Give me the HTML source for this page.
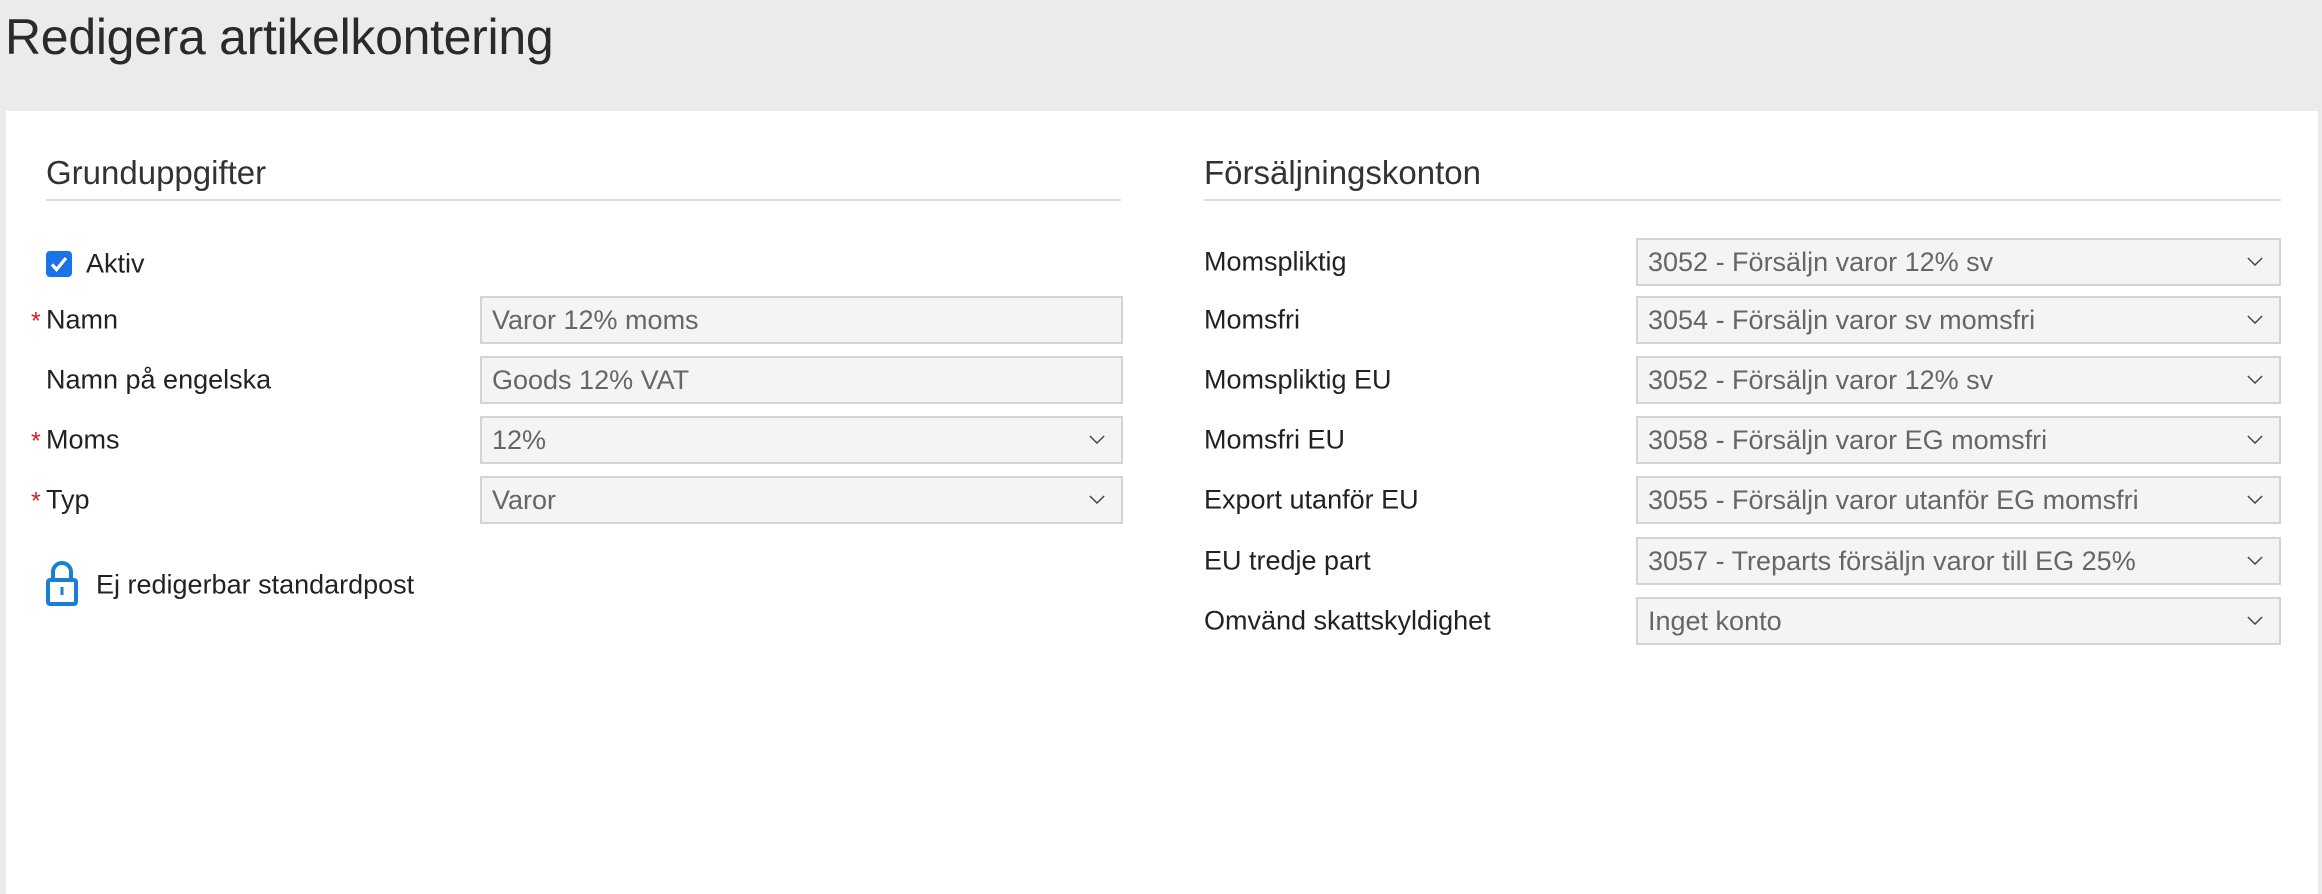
<!DOCTYPE html>
<html><head><meta charset="utf-8"><style>
body{margin:0;width:2322px;height:894px;background:#ebebeb;font-family:"Liberation Sans",sans-serif;color:#222;position:relative;overflow:hidden}
.title{position:absolute;left:5px;top:8px;font-size:50px;color:#2a2a2a;letter-spacing:-0.3px}
.panel{position:absolute;left:6px;top:111px;width:2312px;height:783px;background:#fff}
.h{position:absolute;font-size:33px;color:#333}
.line{position:absolute;height:2px;background:#ddd}
.lab{position:absolute;font-size:27px;color:#222;transform:translateY(-50%)}
.star{position:absolute;font-size:25px;color:#c22;transform:translateY(-50%)}
.inp{position:absolute;height:44px;background:#f4f4f4;border:2px solid #d4d4d4;box-sizing:content-box;font-size:27px;color:#666;line-height:44px;padding-left:10px}
.chev{position:absolute;right:16px;top:17px;width:16px;height:9px}
</style></head><body>
<div class="title">Redigera artikelkontering</div>
<div class="panel"></div>
<div class="h" style="left:46px;top:154px">Grunduppgifter</div>
<div class="line" style="left:46px;top:199px;width:1075px"></div>
<div class="h" style="left:1204px;top:154px">Försäljningskonton</div>
<div class="line" style="left:1204px;top:199px;width:1077px"></div>

<div style="position:absolute;left:46px;top:251px;width:26px;height:26px;background:#1a73e8;border-radius:4px"><svg width="26" height="26" viewBox="0 0 26 26"><path d="M6 13.5l4.5 5L20 7" stroke="#fff" stroke-width="3.2" fill="none"/></svg></div>
<div class="lab" style="left:86px;top:264px">Aktiv</div>

<div class="star" style="left:31px;top:322px">*</div><div class="lab" style="left:46px;top:320px">Namn</div>
<div class="inp" style="left:480px;top:296px;width:629px">Varor 12% moms</div>
<div class="lab" style="left:46px;top:380px">Namn på engelska</div>
<div class="inp" style="left:480px;top:356px;width:629px">Goods 12% VAT</div>
<div class="star" style="left:31px;top:442px">*</div><div class="lab" style="left:46px;top:440px">Moms</div>
<div class="inp" style="left:480px;top:416px;width:629px">12%<svg class="chev" viewBox="0 0 18 10"><path d="M1 1l8 8 8-8" stroke="#444" stroke-width="1.6" fill="none"/></svg></div>
<div class="star" style="left:31px;top:502px">*</div><div class="lab" style="left:46px;top:500px">Typ</div>
<div class="inp" style="left:480px;top:476px;width:629px">Varor<svg class="chev" viewBox="0 0 18 10"><path d="M1 1l8 8 8-8" stroke="#444" stroke-width="1.6" fill="none"/></svg></div>

<svg style="position:absolute;left:46px;top:560px" width="32" height="46" viewBox="0 0 32 46"><path d="M7 20V12a9 9 0 0 1 18 0v8" stroke="#1a7fd4" stroke-width="4" fill="none"/><rect x="2" y="20" width="28" height="24" rx="2" stroke="#1a7fd4" stroke-width="4" fill="none"/><rect x="14.5" y="27" width="3" height="8" fill="#1a7fd4"/></svg>
<div class="lab" style="left:96px;top:585px">Ej redigerbar standardpost</div>

<div class="lab" style="left:1204px;top:262px">Momspliktig</div>
<div class="inp" style="left:1636px;top:238px;width:631px">3052 - Försäljn varor 12% sv<svg class="chev" viewBox="0 0 18 10"><path d="M1 1l8 8 8-8" stroke="#444" stroke-width="1.6" fill="none"/></svg></div>
<div class="lab" style="left:1204px;top:320px">Momsfri</div>
<div class="inp" style="left:1636px;top:296px;width:631px">3054 - Försäljn varor sv momsfri<svg class="chev" viewBox="0 0 18 10"><path d="M1 1l8 8 8-8" stroke="#444" stroke-width="1.6" fill="none"/></svg></div>
<div class="lab" style="left:1204px;top:380px">Momspliktig EU</div>
<div class="inp" style="left:1636px;top:356px;width:631px">3052 - Försäljn varor 12% sv<svg class="chev" viewBox="0 0 18 10"><path d="M1 1l8 8 8-8" stroke="#444" stroke-width="1.6" fill="none"/></svg></div>
<div class="lab" style="left:1204px;top:440px">Momsfri EU</div>
<div class="inp" style="left:1636px;top:416px;width:631px">3058 - Försäljn varor EG momsfri<svg class="chev" viewBox="0 0 18 10"><path d="M1 1l8 8 8-8" stroke="#444" stroke-width="1.6" fill="none"/></svg></div>
<div class="lab" style="left:1204px;top:500px">Export utanför EU</div>
<div class="inp" style="left:1636px;top:476px;width:631px">3055 - Försäljn varor utanför EG momsfri<svg class="chev" viewBox="0 0 18 10"><path d="M1 1l8 8 8-8" stroke="#444" stroke-width="1.6" fill="none"/></svg></div>
<div class="lab" style="left:1204px;top:561px">EU tredje part</div>
<div class="inp" style="left:1636px;top:537px;width:631px">3057 - Treparts försäljn varor till EG 25%<svg class="chev" viewBox="0 0 18 10"><path d="M1 1l8 8 8-8" stroke="#444" stroke-width="1.6" fill="none"/></svg></div>
<div class="lab" style="left:1204px;top:621px">Omvänd skattskyldighet</div>
<div class="inp" style="left:1636px;top:597px;width:631px">Inget konto<svg class="chev" viewBox="0 0 18 10"><path d="M1 1l8 8 8-8" stroke="#444" stroke-width="1.6" fill="none"/></svg></div>
</body></html>
